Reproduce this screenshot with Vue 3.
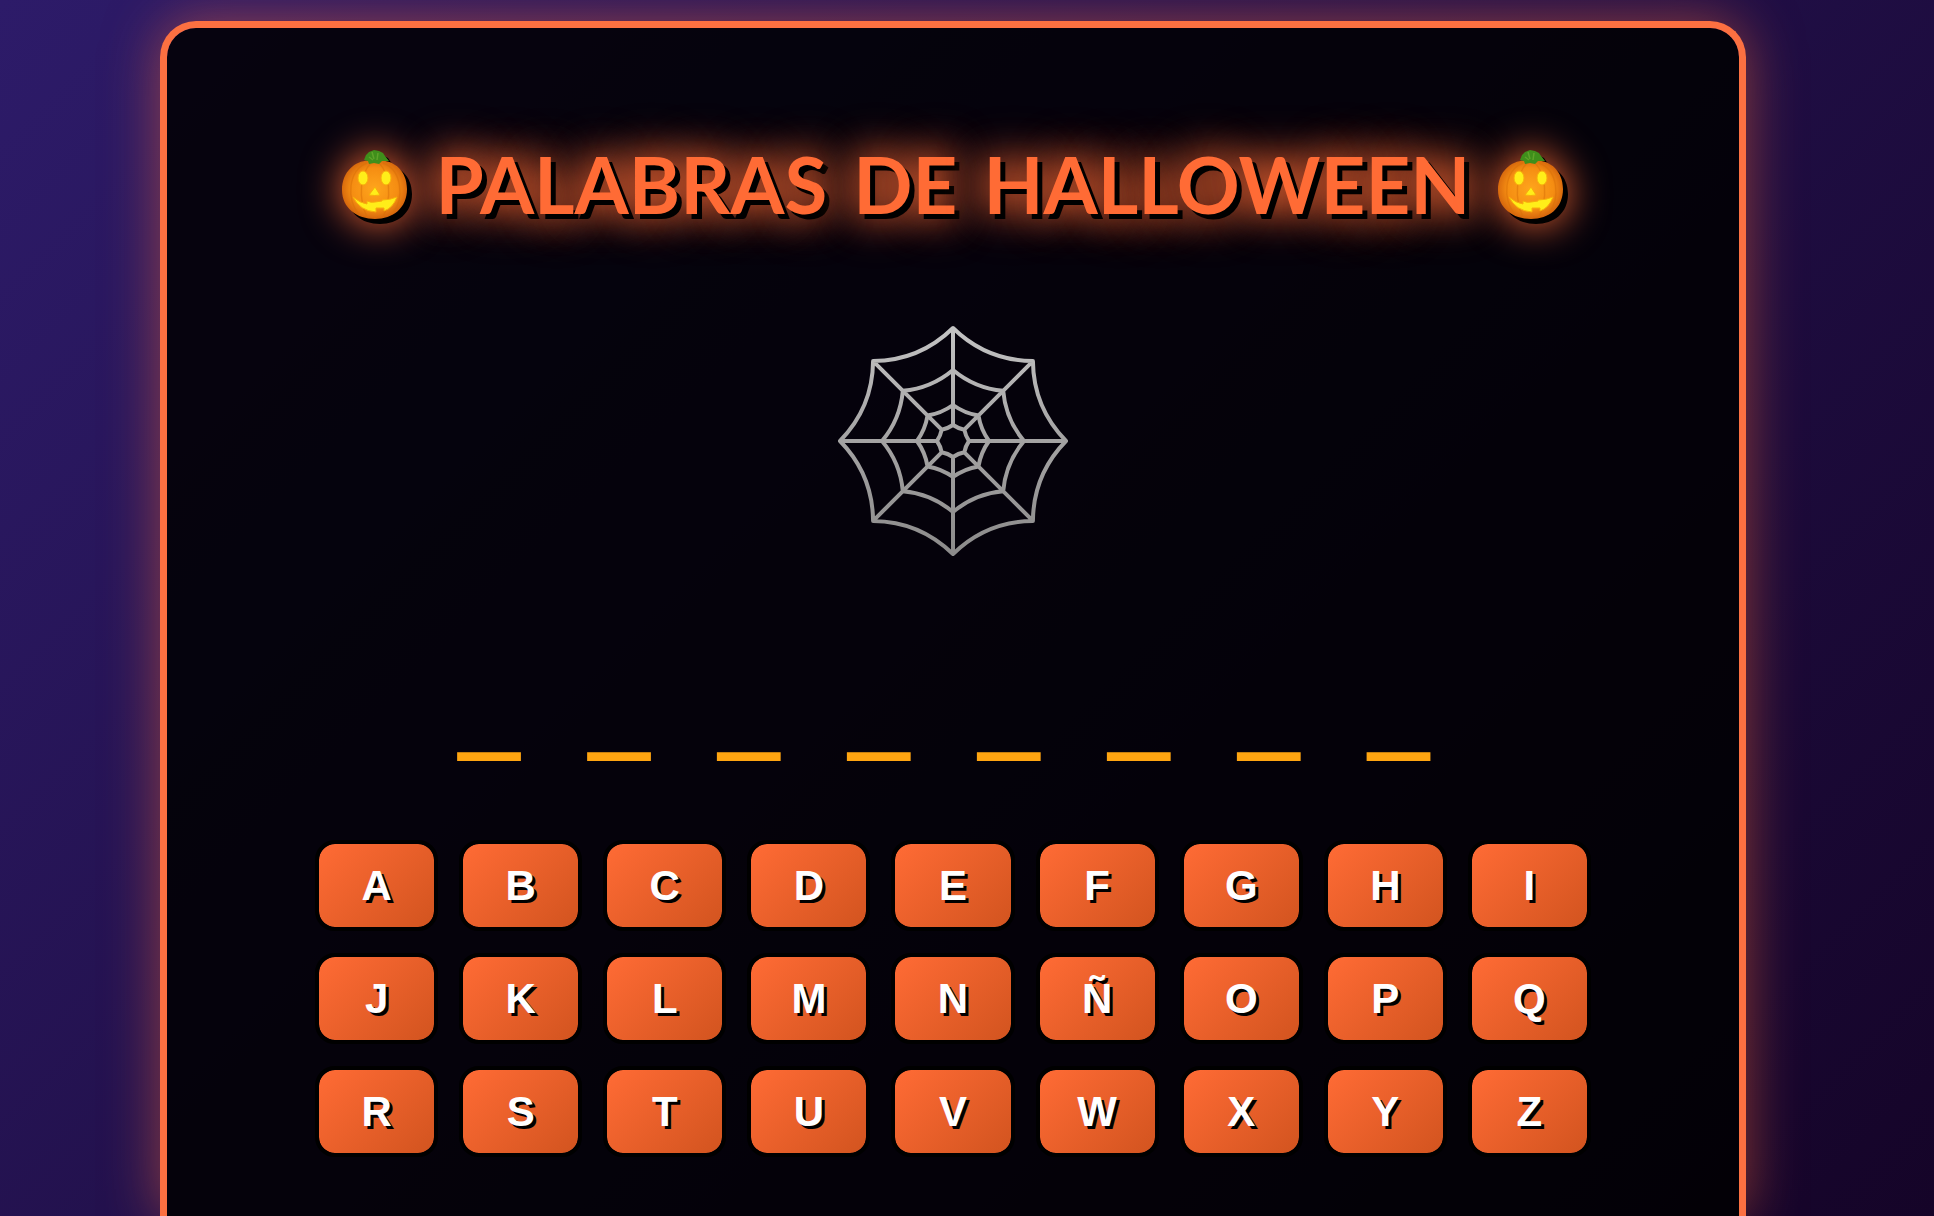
<script setup>
const rows = ['ABCDEFGHI', 'JKLMNÑOPQ', 'RSTUVWXYZ']
const letters = rows.join('').split('')
const titleWords = ['PALABRAS', 'DE', 'HALLOWEEN']
const word = Array(8).fill('_')

const at = (radius, step) => {
  const angle = (step * Math.PI) / 4
  return `${(radius * Math.sin(angle)).toFixed(2)} ${(-radius * Math.cos(angle)).toFixed(2)}`
}

// Each ring is an eight-pointed loop whose sides bend toward the centre.
const ring = (tip, bend) => {
  let d = `M${at(tip, 0)}`
  for (let i = 0; i < 8; i++) d += ` Q${at(bend, i + 0.5)} ${at(tip, i + 1)}`
  return d + 'Z'
}

const rings = [ring(113, 87), ring(71, 57), ring(36, 30), ring(16, 13.5)]
const spokes = [0, 1, 2, 3, 4, 5, 6, 7].map((i) => `M${at(16, i)} L${at(113, i)}`).join(' ')
const web = [...rings, spokes].join(' ')
</script>

<template>
  <div class="page">
    <main class="card">
      <h1 class="title">
        <svg v-for="side in 2" :key="side" class="pumpkin" :class="{ last: side === 2 }" viewBox="0 0 70 72" aria-hidden="true">
          <defs>
            <radialGradient :id="'skin' + side" cx="50%" cy="48%" r="55%">
              <stop offset="0" stop-color="#ffa51c" />
              <stop offset="0.65" stop-color="#f58d12" />
              <stop offset="1" stop-color="#cf5f0c" />
            </radialGradient>
          </defs>
          <path d="M35 14C48 9 67 19 67 41C67 60 53 71 35 71C17 71 2 60 2 42C2 20 21 9 35 14Z" :fill="`url(#skin${side})`" />
          <g fill="none" stroke="#d97008" stroke-width="1.5" opacity="0.5">
            <path d="M27 15C8 22 6 52 19 66" />
            <path d="M31 15C20 26 18 50 27 69" />
            <path d="M43 15C62 22 65 51 52 66" />
            <path d="M39 15C50 26 52 50 43 69" />
          </g>
          <path d="M24 12L26 7L29 4L34 2L39 3L43 5L45 8L49 13L42 13L39 16L34 15L29 16L28 13Z" fill="#3f8f1b" />
          <path d="M32 4L34 11M38 5L37 12M29 9L33 12" fill="none" stroke="#5ea32a" stroke-width="1.5" />
          <g fill="#ffee19" stroke="#f7ae0c" stroke-width="1">
            <ellipse cx="23" cy="30" rx="5" ry="7" />
            <ellipse cx="46" cy="30" rx="5" ry="7" />
            <path d="M35 39L29 47Q35 48 40 47Z" />
            <path d="M13 49Q20 55 27 56L27 53Q31 55 35 54L42 53L42 52Q50 52 57 49Q53 60 44 63L44 60L36 60L36 64Q20 63 13 49Z" />
          </g>
        </svg>
        <span v-for="text in titleWords" :key="text">{{ text }}</span>
      </h1>

      <svg class="web" viewBox="-117 -117 234 234" role="img" aria-label="Telaraña">
        <defs>
          <linearGradient id="silk" gradientUnits="userSpaceOnUse" x1="0" y1="-114" x2="0" y2="114">
            <stop offset="0" stop-color="#c4c4c4" />
            <stop offset="0.5" stop-color="#a4a3a3" />
            <stop offset="1" stop-color="#8c8b8b" />
          </linearGradient>
        </defs>
        <path :d="web" fill="none" stroke="url(#silk)" stroke-width="4" stroke-linejoin="round" />
      </svg>

      <p class="word">
        <span v-for="(slot, i) in word" :key="i">{{ slot }}</span>
      </p>

      <div class="keys">
        <button v-for="letter in letters" :key="letter" type="button" class="key">{{ letter }}</button>
      </div>
    </main>
  </div>
</template>

<style>
body {
  margin: 0;
  background: #150428;
}
</style>

<style scoped>
.page {
  box-sizing: border-box;
  min-height: 100vh;
  display: flex;
  padding: 21px 188px 0 160px;
  overflow: hidden;
  background: linear-gradient(135deg, #2d1b69, #150428);
  font-family: "Liberation Sans", Arial, sans-serif;
}
.card {
  box-sizing: border-box;
  flex: 1;
  min-width: 0;
  display: flex;
  flex-direction: column;
  align-items: center;
  padding: 100px 148px 57px;
  border: 7px solid #fc7041;
  border-bottom: 0;
  border-radius: 36px 36px 0 0;
  background: rgba(0, 0, 0, 0.85);
  background-clip: padding-box;
  box-shadow: 0 0 54px rgba(255, 107, 53, 0.5);
}
.title {
  display: flex;
  align-items: center;
  justify-content: center;
  gap: 26px;
  margin: 0;
  color: #ff6b35;
  font-family: "Comic Sans MS", Lato, sans-serif;
  font-size: 78px;
  font-weight: 700;
  line-height: 112px;
  white-space: nowrap;
  text-shadow: 5px 5px 0 #000, 0 0 36px #ff6b35, 0 0 48px #ff6b35;
}
.pumpkin {
  width: 70px;
  height: 72px;
  overflow: visible;
  filter: drop-shadow(5px 5px 0 #000) drop-shadow(0 0 20px #ff6b35);
}
.pumpkin.last {
  order: 1;
}
.web {
  width: 234px;
  height: 234px;
  margin-top: 84px;
}
.word {
  display: flex;
  justify-content: center;
  gap: 71px;
  margin: 80px 0 74px;
  padding-right: 18px;
  color: #ffa511;
  font-size: 106px;
  line-height: 128px;
  -webkit-text-stroke: 2px #ffa511;
}
.keys {
  align-self: stretch;
  display: grid;
  grid-template-columns: repeat(9, 1fr);
  gap: 22px 21px;
}
.key {
  height: 91px;
  padding: 0;
  border: 4px solid #000;
  border-radius: 20px;
  background: linear-gradient(135deg, #ff6b35, #d2541f) padding-box;
  color: #fff;
  font-family: inherit;
  font-size: 42px;
  font-weight: 700;
  line-height: 48px;
  text-shadow: 3px 3px 0 #000;
  cursor: pointer;
}
</style>
